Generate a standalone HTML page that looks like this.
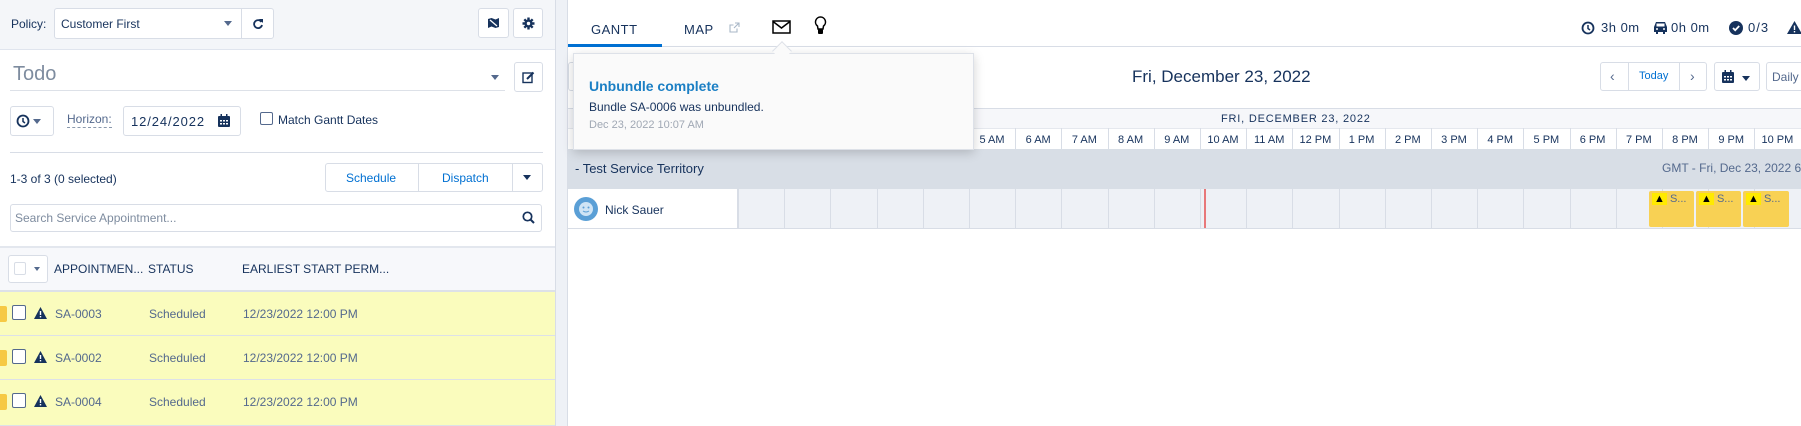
<!DOCTYPE html>
<html><head><meta charset="utf-8"><style>
*{box-sizing:border-box;margin:0;padding:0}
body{width:1801px;height:426px;overflow:hidden;background:#fff;font-family:"Liberation Sans",sans-serif;color:#16325c;font-size:12px;position:relative}
.a{position:absolute}
.btn{position:absolute;border:1px solid #d8dde6;border-radius:3px;background:#fff}
.t{position:absolute;white-space:nowrap}
.vc{display:flex;align-items:center;justify-content:center}
</style></head><body>
<!-- LEFT PANEL -->
<div class="a" style="left:0;top:0;width:555px;height:50px;background:#f4f6f9;border-bottom:1px solid #e0e5ee"></div>
<div class="t" style="left:11px;top:17px;font-size:12px;color:#16325c">Policy:</div>
<div class="btn" style="left:54px;top:8px;width:188px;height:31px;border-radius:3px 0 0 3px"></div>
<div class="t" style="left:61px;top:17px;font-size:12px;color:#16325c">Customer First</div>
<div class="a" style="left:224px;top:21px;border:4px solid transparent;border-top:5px solid #54698d"></div>
<div class="btn vc" style="left:241px;top:8px;width:33px;height:31px;border-radius:0 3px 3px 0"><svg width="12" height="12" viewBox="0 0 12 12"><path d="M9.5 4A4 4 0 1 0 10 7" fill="none" stroke="#16325c" stroke-width="1.8"/><path d="M7 1L11 1L11 5Z" fill="#16325c"/></svg></div>
<div class="btn vc" style="left:478px;top:8px;width:31px;height:30px"><svg width="13" height="12" viewBox="0 0 13 12"><path d="M1 2L4.5 1L8.5 2.5L12 1V10L8.5 11L4.5 9.5L1 11Z" fill="#16325c"/><path d="M3 3L10 9" stroke="#fff" stroke-width="1.3"/></svg></div>
<div class="btn vc" style="left:513px;top:8px;width:30px;height:30px"><svg width="13" height="13" viewBox="0 0 13 13"><circle cx="6.5" cy="6.5" r="4" fill="#16325c"/><g stroke="#16325c" stroke-width="2.4"><path d="M6.5 0.5V12.5M0.5 6.5H12.5M2.3 2.3L10.7 10.7M10.7 2.3L2.3 10.7"/></g><circle cx="6.5" cy="6.5" r="1.7" fill="#fff"/></svg></div>

<div class="t" style="left:13px;top:63px;font-size:20px;color:#7e8c9f">Todo</div>
<div class="a" style="left:10px;top:90px;width:495px;height:1px;background:#dde1e8"></div>
<div class="a" style="left:491px;top:75px;border:4px solid transparent;border-top:5px solid #54698d"></div>
<div class="btn vc" style="left:514px;top:62px;width:29px;height:30px"><svg width="13" height="13" viewBox="0 0 13 13"><rect x="1" y="2" width="9" height="9.5" fill="none" stroke="#16325c" stroke-width="1.4"/><path d="M5 8L11.5 1.5" stroke="#16325c" stroke-width="2"/></svg></div>

<div class="btn" style="left:10px;top:106px;width:44px;height:30px"></div>
<svg class="a" style="left:16px;top:114px" width="14" height="14" viewBox="0 0 14 14"><circle cx="7" cy="7" r="5.5" fill="none" stroke="#16325c" stroke-width="1.8"/><path d="M7 4V7.5L9 9" fill="none" stroke="#16325c" stroke-width="1.5"/></svg>
<div class="a" style="left:33px;top:119px;border:4px solid transparent;border-top:5px solid #54698d"></div>
<div class="t" style="left:67px;top:112px;font-size:12px;color:#54698d;border-bottom:1px dashed #8a99ad;padding-bottom:1px">Horizon:</div>
<div class="btn" style="left:123px;top:106px;width:118px;height:30px"></div>
<div class="t" style="left:131px;top:114px;font-size:13px;color:#16325c;letter-spacing:0.9px">12/24/2022</div>
<svg class="a" style="left:218px;top:114px" width="12" height="13" viewBox="0 0 12 13"><rect x="0" y="2" width="12" height="11" rx="1" fill="#16325c"/><rect x="2.5" y="0" width="1.5" height="3" fill="#16325c"/><rect x="8" y="0" width="1.5" height="3" fill="#16325c"/><g fill="#fff"><rect x="2" y="6" width="2" height="1.5"/><rect x="5" y="6" width="2" height="1.5"/><rect x="8" y="6" width="2" height="1.5"/><rect x="2" y="9" width="2" height="1.5"/><rect x="5" y="9" width="2" height="1.5"/><rect x="8" y="9" width="2" height="1.5"/></g></svg>
<div class="a" style="left:260px;top:112px;width:13px;height:13px;border:1px solid #54698d;border-radius:2px;background:#fff"></div>
<div class="t" style="left:278px;top:113px;font-size:12px;color:#16325c">Match Gantt Dates</div>
<div class="a" style="left:10px;top:152px;width:533px;height:1px;background:#d8dde6"></div>

<div class="t" style="left:10px;top:172px;font-size:12px;color:#16325c">1-3 of 3 (0 selected)</div>
<div class="btn" style="left:325px;top:163px;width:218px;height:29px"></div>
<div class="a" style="left:418px;top:163px;width:1px;height:29px;background:#d8dde6"></div>
<div class="a" style="left:512px;top:163px;width:1px;height:29px;background:#d8dde6"></div>
<div class="t" style="left:346px;top:171px;font-size:12px;color:#0070d2">Schedule</div>
<div class="t" style="left:442px;top:171px;font-size:12px;color:#0070d2">Dispatch</div>
<div class="a" style="left:523px;top:175px;border:4px solid transparent;border-top:5px solid #16325c"></div>

<div class="btn" style="left:10px;top:204px;width:532px;height:28px"></div>
<div class="t" style="left:15px;top:211px;font-size:12px;color:#7e8c9f">Search Service Appointment...</div>
<svg class="a" style="left:522px;top:211px" width="13" height="13" viewBox="0 0 13 13"><circle cx="5.5" cy="5.5" r="4.2" fill="none" stroke="#16325c" stroke-width="1.7"/><path d="M8.5 8.5L12 12" stroke="#16325c" stroke-width="2"/></svg>

<div class="a" style="left:0;top:246px;width:555px;height:2px;background:#e3e7ee"></div>
<div class="a" style="left:0;top:248px;width:555px;height:44px;background:#f7f8fb;border-bottom:2px solid #dde1e8"></div>
<div class="btn" style="left:8px;top:255px;width:40px;height:28px"></div>
<div class="a" style="left:14px;top:262px;width:12px;height:13px;border:1px solid #d8dde6;border-radius:2px"></div>
<div class="a" style="left:34px;top:267px;border:3px solid transparent;border-top:4px solid #54698d"></div>
<div class="t" style="left:54px;top:262px;font-size:12px;color:#16325c">APPOINTMEN...</div>
<div class="t" style="left:148px;top:262px;font-size:12px;color:#16325c">STATUS</div>
<div class="t" style="left:242px;top:262px;font-size:12px;color:#16325c">EARLIEST START PERM...</div>

<!-- rows -->
<div class="a" style="left:0;top:292px;width:555px;height:44px;background:#fafcbd;border-bottom:1px solid #dde1e8"></div>
<div class="a" style="left:0;top:336px;width:555px;height:44px;background:#fafcbd;border-bottom:1px solid #dde1e8"></div>
<div class="a" style="left:0;top:380px;width:555px;height:46px;background:#fafcbd;border-bottom:1px solid #dde1e8"></div>

<div class="a" style="left:0;top:306px;width:7px;height:16px;background:#f6c944;border-radius:0 2px 2px 0"></div>
<div class="a" style="left:0;top:350px;width:7px;height:16px;background:#f6c944;border-radius:0 2px 2px 0"></div>
<div class="a" style="left:0;top:394px;width:7px;height:16px;background:#f6c944;border-radius:0 2px 2px 0"></div>
<div class="a" style="left:12px;top:305px;width:14px;height:15px;border:1px solid #54698d;border-radius:2px;background:#fff"></div>
<div class="a" style="left:12px;top:349px;width:14px;height:15px;border:1px solid #54698d;border-radius:2px;background:#fff"></div>
<div class="a" style="left:12px;top:393px;width:14px;height:15px;border:1px solid #54698d;border-radius:2px;background:#fff"></div>
<svg class="a" style="left:34px;top:307px" width="13" height="12" viewBox="0 0 13 12"><path d="M6.5 0L13 12H0Z" fill="#16325c"/><rect x="5.8" y="4" width="1.4" height="4" fill="#fff"/><rect x="5.8" y="9" width="1.4" height="1.4" fill="#fff"/></svg>
<svg class="a" style="left:34px;top:351px" width="13" height="12" viewBox="0 0 13 12"><path d="M6.5 0L13 12H0Z" fill="#16325c"/><rect x="5.8" y="4" width="1.4" height="4" fill="#fff"/><rect x="5.8" y="9" width="1.4" height="1.4" fill="#fff"/></svg>
<svg class="a" style="left:34px;top:395px" width="13" height="12" viewBox="0 0 13 12"><path d="M6.5 0L13 12H0Z" fill="#16325c"/><rect x="5.8" y="4" width="1.4" height="4" fill="#fff"/><rect x="5.8" y="9" width="1.4" height="1.4" fill="#fff"/></svg>
<div class="t" style="left:55px;top:307px;color:#54698d">SA-0003</div>
<div class="t" style="left:149px;top:307px;color:#54698d">Scheduled</div>
<div class="t" style="left:243px;top:307px;color:#54698d">12/23/2022 12:00 PM</div>
<div class="t" style="left:55px;top:351px;color:#54698d">SA-0002</div>
<div class="t" style="left:149px;top:351px;color:#54698d">Scheduled</div>
<div class="t" style="left:243px;top:351px;color:#54698d">12/23/2022 12:00 PM</div>
<div class="t" style="left:55px;top:395px;color:#54698d">SA-0004</div>
<div class="t" style="left:149px;top:395px;color:#54698d">Scheduled</div>
<div class="t" style="left:243px;top:395px;color:#54698d">12/23/2022 12:00 PM</div>

<!-- gutter -->
<div class="a" style="left:555px;top:0;width:13px;height:426px;background:#eef1f6;border-left:1px solid #d8dde6;border-right:1px solid #d8dde6"></div>

<!-- RIGHT -->
<div class="a" style="left:568px;top:46px;width:1233px;height:1px;background:#d8dde6"></div>
<div class="a" style="left:568px;top:44px;width:94px;height:3px;background:#0070d2"></div>
<div class="t" style="left:591px;top:22px;font-size:13px;color:#16325c;letter-spacing:0.5px">GANTT</div>
<div class="t" style="left:684px;top:22px;font-size:13px;color:#16325c;letter-spacing:0.5px">MAP</div>
<svg class="a" style="left:729px;top:22px" width="11" height="11" viewBox="0 0 11 11"><path d="M8 6.5V10H1V3H4.5" fill="none" stroke="#a8b7c7" stroke-width="1.1"/><path d="M6 1H10V5M10 1L5 6" fill="none" stroke="#a8b7c7" stroke-width="1.1"/></svg>
<svg class="a" style="left:772px;top:20px" width="19" height="14" viewBox="0 0 19 14"><rect x="1" y="1" width="17" height="12" fill="none" stroke="#000" stroke-width="1.5"/><path d="M1 1.5L9.5 8L18 1.5" fill="none" stroke="#000" stroke-width="1.5"/></svg>
<svg class="a" style="left:814px;top:16px" width="13" height="19" viewBox="0 0 13 19"><path d="M6.5 1A5 5 0 0 0 3.5 10L4 13H9L9.5 10A5 5 0 0 0 6.5 1Z" fill="#fff" stroke="#000" stroke-width="1.5"/><rect x="4" y="13" width="5" height="5" rx="1" fill="#000"/></svg>

<!-- stats -->
<svg class="a" style="left:1581px;top:21px" width="14" height="14" viewBox="0 0 14 14"><circle cx="7" cy="7" r="5.5" fill="none" stroke="#16325c" stroke-width="1.8"/><path d="M7 4V7.5L9 9" fill="none" stroke="#16325c" stroke-width="1.5"/></svg>
<div class="t" style="left:1601px;top:20px;font-size:13px;color:#16325c;letter-spacing:0.5px">3h 0m</div>
<svg class="a" style="left:1653px;top:21px" width="15" height="13" viewBox="0 0 15 13"><path d="M3 1H12L14 6V11H12V13H10V11H5V13H3V11H1V6Z" fill="#16325c"/><rect x="3.5" y="2.5" width="8" height="3" fill="#fff"/><circle cx="4" cy="8" r="1" fill="#fff"/><circle cx="11" cy="8" r="1" fill="#fff"/></svg>
<div class="t" style="left:1671px;top:20px;font-size:13px;color:#16325c;letter-spacing:0.5px">0h 0m</div>
<svg class="a" style="left:1729px;top:21px" width="14" height="14" viewBox="0 0 14 14"><circle cx="7" cy="7" r="7" fill="#16325c"/><path d="M4 7L6.2 9.2L10.2 5" fill="none" stroke="#fff" stroke-width="1.8"/></svg>
<div class="t" style="left:1748px;top:20px;font-size:13px;color:#16325c;letter-spacing:1px">0/3</div>
<svg class="a" style="left:1787px;top:21px" width="15" height="13" viewBox="0 0 15 13"><path d="M7.5 0L15 13H0Z" fill="#16325c"/><rect x="6.8" y="4.5" width="1.4" height="4.5" fill="#fff"/><rect x="6.8" y="10" width="1.4" height="1.4" fill="#fff"/></svg>

<!-- date nav -->
<div class="btn" style="left:568px;top:62px;width:40px;height:29px"></div>
<div class="t" style="left:1132px;top:67px;font-size:17px;color:#16325c">Fri, December 23, 2022</div>
<div class="btn" style="left:1600px;top:62px;width:107px;height:29px"></div>
<div class="a" style="left:1628px;top:62px;width:1px;height:29px;background:#d8dde6"></div>
<div class="a" style="left:1679px;top:62px;width:1px;height:29px;background:#d8dde6"></div>
<div class="t" style="left:1610px;top:68px;font-size:14px;color:#54698d">‹</div>
<div class="t" style="left:1639px;top:70px;font-size:11px;color:#0070d2">Today</div>
<div class="t" style="left:1690px;top:68px;font-size:14px;color:#54698d">›</div>
<div class="btn" style="left:1714px;top:62px;width:46px;height:29px"></div>
<svg class="a" style="left:1722px;top:70px" width="12" height="13" viewBox="0 0 12 13"><rect x="0" y="2" width="12" height="11" rx="1" fill="#16325c"/><rect x="2.5" y="0" width="1.5" height="3" fill="#16325c"/><rect x="8" y="0" width="1.5" height="3" fill="#16325c"/><g fill="#fff"><rect x="2" y="6" width="2" height="1.5"/><rect x="5" y="6" width="2" height="1.5"/><rect x="8" y="6" width="2" height="1.5"/><rect x="2" y="9" width="2" height="1.5"/><rect x="5" y="9" width="2" height="1.5"/><rect x="8" y="9" width="2" height="1.5"/></g></svg>
<div class="a" style="left:1742px;top:76px;border:4px solid transparent;border-top:5px solid #16325c"></div>
<div class="btn" style="left:1766px;top:62px;width:50px;height:29px"></div>
<div class="t" style="left:1772px;top:70px;font-size:12px;color:#54698d">Daily</div>

<!-- gantt -->
<div class="a" style="left:568px;top:108px;width:1233px;height:41px;background:#f6f7fa;border-top:1px solid #d8dde6"></div>
<div class="t" style="left:1221px;top:113px;font-size:11px;color:#16325c;letter-spacing:0.8px">FRI, DECEMBER 23, 2022</div>
<div class="a" style="left:568px;top:128px;width:1233px;height:21px;background:#fff;border-top:1px solid #e5e8ee"></div>
<div class="a" style="left:568px;top:149px;width:1233px;height:40px;background:#d8dee6"></div>
<div class="t" style="left:575px;top:161px;font-size:13px;color:#16325c">- Test Service Territory</div>
<div class="t" style="left:1662px;top:161px;font-size:12px;color:#54698d">GMT - Fri, Dec 23, 2022 6</div>
<div class="a" style="left:568px;top:189px;width:1233px;height:40px;background:#eef1f6;border-bottom:1px solid #d8dde6"></div>
<div class="a" style="left:568px;top:189px;width:170px;height:39px;background:#fff;border-right:1px solid #d8dde6"></div>
<svg class="a" style="left:574px;top:197px" width="24" height="24" viewBox="0 0 24 24"><circle cx="12" cy="12" r="12" fill="#5a9fd6"/><circle cx="12" cy="12" r="7" fill="#cfe4f5"/><circle cx="9.5" cy="10.5" r="1" fill="#5a9fd6"/><circle cx="14.5" cy="10.5" r="1" fill="#5a9fd6"/><path d="M9 14Q12 16 15 14" fill="none" stroke="#5a9fd6" stroke-width="1"/></svg>
<div class="t" style="left:605px;top:203px;font-size:12px;color:#16325c">Nick Sauer</div>
<div id="hours"></div>
<div class="a" style="left:1204px;top:189px;width:2px;height:39px;background:#e8787a"></div>
<div class="a" style="left:1649px;top:191px;width:45px;height:36px;background:#f8d154;border-radius:2px"></div>
<div class="a" style="left:1696px;top:191px;width:45px;height:36px;background:#f8d154;border-radius:2px"></div>
<div class="a" style="left:1743px;top:191px;width:46px;height:36px;background:#f8d154;border-radius:2px"></div>
<div class="t" style="left:1652px;top:193px;font-size:11px;color:#54698d"><span style="background:#ffea00;color:#000;padding:0 2px">▲</span> S...</div>
<div class="t" style="left:1699px;top:193px;font-size:11px;color:#54698d"><span style="background:#ffea00;color:#000;padding:0 2px">▲</span> S...</div>
<div class="t" style="left:1746px;top:193px;font-size:11px;color:#54698d"><span style="background:#ffea00;color:#000;padding:0 2px">▲</span> S...</div>

<!-- popup -->
<div class="a" style="left:573px;top:53px;width:401px;height:97px;background:#fafafa;border:1px solid #dde1e8;box-shadow:0 3px 10px rgba(0,0,0,0.18)"></div>
<div class="a" style="left:775px;top:44px;width:14px;height:14px;background:#fafafa;border-left:1px solid #dde1e8;border-top:1px solid #dde1e8;transform:rotate(45deg)"></div>
<div class="t" style="left:589px;top:78px;font-size:14px;font-weight:bold;color:#1b7fc4">Unbundle complete</div>
<div class="t" style="left:589px;top:100px;font-size:12px;color:#16325c">Bundle SA-0006 was unbundled.</div>
<div class="t" style="left:589px;top:119px;font-size:11px;color:#a0a8b4">Dec 23, 2022 10:07 AM</div>

<script>
var h=document.getElementById('hours'),s='';
var lbl=['12 AM','1 AM','2 AM','3 AM','4 AM','5 AM','6 AM','7 AM','8 AM','9 AM','10 AM','11 AM','12 PM','1 PM','2 PM','3 PM','4 PM','5 PM','6 PM','7 PM','8 PM','9 PM','10 PM','11 PM'];
for(var i=0;i<24;i++){var x=738+i*46.2;
s+='<div class="a" style="left:'+x+'px;top:128px;width:1px;height:21px;background:#d8dde6"></div>';
s+='<div class="a" style="left:'+x+'px;top:189px;width:1px;height:39px;background:#d8dde6"></div>';
s+='<div class="t" style="left:'+x+'px;top:134px;width:46px;text-align:center;font-size:11px;color:#16325c">'+lbl[i]+'</div>';}
h.innerHTML=s;
</script>
</body></html>
